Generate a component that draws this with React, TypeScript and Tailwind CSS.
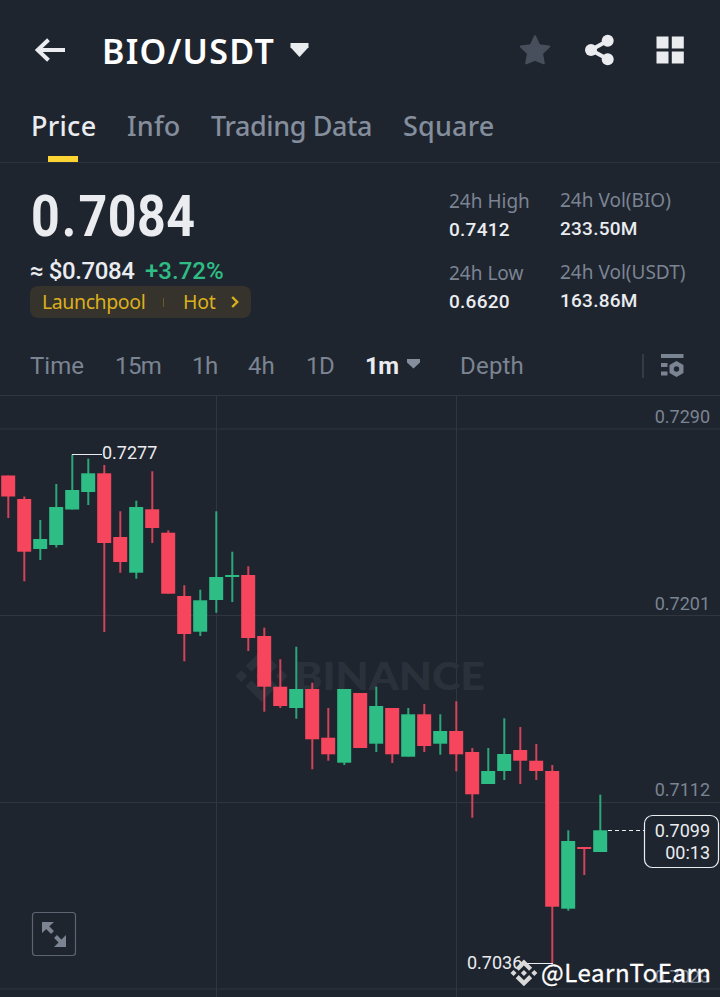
import React from 'react';

interface Candle {
    top: number;
    bottom: number;
    high: number;
    low: number;
    up?: boolean;
}

const UP = '#2ebd85';
const DOWN = '#f6465d';

const c = (top: number, bottom: number, high: number, low: number, up = false): Candle => ({ top, bottom, high, low, up });

// y values are page based, the chart svg starts at CHART_TOP
const CHART_TOP = 395;

const candles: Candle[] = [
    c(475.5, 496.5, 475.5, 518),
    c(499, 551.7, 496.5, 581.3),
    c(539, 549, 520, 560, true),
    c(507, 545, 484, 547.5, true),
    c(490, 509.5, 454.5, 509.5, true),
    c(473.3, 492, 458.7, 505, true),
    c(473.3, 543, 465, 632),
    c(537, 562, 511.3, 572.7),
    c(507, 572.7, 500.7, 578.7, true),
    c(509.3, 528, 471.3, 543),
    c(532.7, 593.7, 530.3, 593.7),
    c(596, 634, 585.3, 661.3),
    c(600.3, 631.7, 589.7, 636, true),
    c(577, 600, 511.3, 612.7, true),
    c(575, 577, 551.7, 602, true),
    c(575, 638, 566.3, 651),
    c(636, 686.7, 627.7, 711.7),
    c(686.7, 706, 659.3, 708),
    c(689, 708, 646.7, 718.7, true),
    c(689, 739.3, 682.7, 769.3),
    c(737.7, 754.3, 708, 760.7),
    c(689, 762.7, 689, 765, true),
    c(693, 748, 693, 748),
    c(706, 743.7, 686.7, 752, true),
    c(708, 754.3, 708, 763),
    c(714.3, 756.7, 708, 756.7, true),
    c(714.3, 746, 704, 752),
    c(731, 743.7, 714.3, 754.7, true),
    c(731, 754.3, 701.3, 771.3),
    c(752, 794.3, 748, 817.7),
    c(771, 784, 748, 784, true),
    c(754, 771, 718.3, 780, true),
    c(750, 760.7, 727, 784),
    c(760.7, 771, 744, 780),
    c(771, 906.7, 765, 963.3),
    c(841, 908.7, 830.3, 910.7, true),
    c(847, 849, 848, 875),
    c(830.3, 852, 794.7, 852, true),
];

const gridRows = [395.5, 429, 615.5, 802.5, 989];
const gridCols = [216.5, 456.5];

const axisLabels = [
    { text: '0.7290', y: 423 },
    { text: '0.7201', y: 610 },
    { text: '0.7112', y: 796 },
    { text: '0.7023', y: 983 },
];

const tabs = [
    { label: 'Price', cls: 'w-[96px] text-[#eaecef] tracking-[0.3px]', active: true },
    { label: 'Info', cls: 'w-[84px] text-[#848e9c] tracking-[0.2px]' },
    { label: 'Trading Data', cls: 'w-[192px] text-[#848e9c] tracking-[-0.4px]' },
    { label: 'Square', cls: 'w-[100px] text-[#848e9c] tracking-[0.2px]' },
];

const intervals = [
    { label: 'Time', cls: 'w-[85px]' },
    { label: '15m', cls: 'w-[77px] tracking-[-0.6px]' },
    { label: '1h', cls: 'w-[56px] tracking-[-0.5px]' },
    { label: '4h', cls: 'w-[58px]' },
    { label: '1D', cls: 'w-[59px] tracking-[-0.5px]' },
];

const BinanceMark = () => (
    <path d="M16.624 13.920l2.717 2.715-7.353 7.353-7.353-7.352 2.717-2.716 4.636 4.659 4.636-4.659zm4.637-4.637L24 12l-2.715 2.716L18.568 12l2.693-2.717zm-9.272.001l2.716 2.692-2.717 2.717L9.272 12l2.717-2.716zm-9.273-.001L5.409 12l-2.692 2.692L0 12l2.716-2.717zM11.988.012l7.353 7.329-2.717 2.715-4.636-4.636-4.636 4.660-2.717-2.716z" />
);

const Header = () => (
    <header className="flex h-[100px] items-center pl-[34px] pr-[36px]">
        <svg className="h-6 w-8" viewBox="0 0 32 24" fill="none" stroke="#eaecef" strokeWidth="4">
            <path d="M31 12H4M14.500 1.700L3.700 12l10.800 10.300" />
        </svg>
        <h1 className="ml-[36px] mt-[2px] w-[188px] whitespace-nowrap font-['Noto_Sans',sans-serif] text-[34px] font-semibold leading-none tracking-[1.3px] text-white">
            BIO/USDT
        </h1>
        <svg className="h-[15px] w-[19px]" viewBox="0 0 19 15" fill="#eaecef">
            <path d="M0.500 0h18v4.200L9.500 14 0.500 4.200z" />
        </svg>
        <div className="ml-auto flex items-center">
            <svg className="h-[32px] w-[32px]" viewBox="0 0 32 32" fill="#474f5c" stroke="#474f5c" strokeWidth="2" strokeLinejoin="round">
                <path d="M16 2.200l4.200 9 10 1.300-7.200 7 1.800 9.800L16 25.800l-8.800 3.500L9 19.500l-7.200-7 10-1.300z" />
            </svg>
            <svg className="ml-[33px] h-8 w-[31px]" viewBox="0 0 31 32" fill="#eaecef">
                <path d="M24 6.500L7 16l17 9.300" fill="none" stroke="#eaecef" strokeWidth="4" />
                <circle cx="7" cy="16" r="6" />
                <circle cx="23.700" cy="6.800" r="6" />
                <circle cx="23.700" cy="25.200" r="6" />
            </svg>
            <svg className="ml-[41px] h-[28px] w-[28px]" viewBox="0 0 28 28" fill="#eaecef">
                <path d="M0.500 0.500h12v12h-12zM15.800 0.500h12v12h-12zM0.500 15.500h12v12h-12zM15.800 15.500h12v12h-12z" />
            </svg>
        </div>
    </header>
);

const Tabs = () => (
    <nav className="flex h-[63px] border-b border-[#2b323c] pl-[31px] pt-[7px] font-['Noto_Sans',sans-serif] text-[27px] font-medium">
        {tabs.map(tab => (
            <div key={tab.label} className={`${tab.cls} flex flex-col justify-between whitespace-nowrap`}>
                <span className="leading-[38px]">{tab.label}</span>
                {tab.active && <div className="ml-[17px] h-[6px] w-[30px] bg-[#fcd535]" />}
            </div>
        ))}
    </nav>
);

const Stat = ({ label, value }: { label: string; value: string }) => (
    <div className="h-[72px] whitespace-nowrap">
        <div className="font-['Noto_Sans',sans-serif] text-[19px] leading-7 text-[#7b8492]">{label}</div>
        <div className="font-[Roboto,sans-serif] text-[19px] font-medium leading-[30px] tracking-[0.25px] text-[#eaecef]">{value}</div>
    </div>
);

const Summary = () => (
    <section className="flex h-[179px] pl-[30px] font-[Roboto,sans-serif]">
        <div className="w-[419px]">
            <div className="mt-[22px] h-[64px] origin-left scale-x-[0.88] whitespace-nowrap pl-px text-[57px] font-bold leading-[64px] tracking-[0.5px] text-[#eaecef]">
                0<span className="mx-[2px]">.</span>7084
            </div>
            <div className="mt-[7px] flex h-[30px] items-center pb-px text-[24px] leading-none">
                <span className="w-[115px] whitespace-nowrap font-medium tracking-[-0.4px] text-[#eaecef]">≈ $0.7084</span>
                <span className="font-medium text-[#2ebd85]">+3.72%</span>
            </div>
            <div className="flex h-[32px] w-[221px] items-center whitespace-nowrap rounded-lg bg-[#35332c] pl-[12px] font-['Noto_Sans',sans-serif] text-[19.5px] text-[#dcaf1d]">
                <span className="w-[121px] tracking-[-0.4px]">Launchpool</span>
                <span className="h-[9px] w-px bg-[#6b5a24]" />
                <span className="ml-[19px] w-[48px] tracking-[-0.3px]">Hot</span>
                <svg className="h-3 w-2" viewBox="0 0 8 12" fill="none" stroke="#dcaf1d" strokeWidth="2.400">
                    <path d="M1.200 1l5 5-5 5" />
                </svg>
            </div>
        </div>
        <div className="w-[111px] pt-[24px]">
            <Stat label="24h High" value="0.7412" />
            <Stat label="24h Low" value="0.6620" />
        </div>
        <div className="pt-[23px]">
            <Stat label="24h Vol(BIO)" value="233.50M" />
            <Stat label="24h Vol(USDT)" value="163.86M" />
        </div>
    </section>
);

const IntervalBar = () => (
    <section className="flex h-[53px] items-center pb-[6px] pl-[30px] font-[Roboto,sans-serif] text-[24px] text-[#7b8492]">
        {intervals.map(item => (
            <span key={item.label} className={`${item.cls} whitespace-nowrap`}>{item.label}</span>
        ))}
        <span className="w-[42px] font-bold tracking-[-0.5px] text-[#eaecef]">1m</span>
        <svg className="mb-[3px] h-[10px] w-[13px]" viewBox="0 0 13 10" fill="#848e9c">
            <path d="M0 0h13v3.500L6.500 9.500 0 3.500z" />
        </svg>
        <span className="ml-[40px] w-[182px] tracking-[0.2px]">Depth</span>
        <span className="h-6 w-[2px] bg-[#333b46]" />
        <svg className="mb-[2px] ml-[16px] h-6 w-6" viewBox="0 0 24 24" fill="#7b8492">
            <path d="M1 1h22.500v4H1zM1 10h6.500v4H1zM1 18.500h6.500v4H1z" />
            <path fillRule="evenodd" d="M16.500 8l7 4v8l-7 4-7-4v-8zM16.500 13.300a2.700 2.700 0 1 0 0 5.400 2.700 2.700 0 0 0 0-5.400z" />
        </svg>
    </section>
);

const Chart = () => (
    <svg className="block h-[602px] w-[720px] font-[Roboto,sans-serif]" viewBox={`0 ${CHART_TOP} 720 602`} fontSize="18">
        <g stroke="#2f3640" strokeWidth="1">
            {gridRows.map(y => <line key={y} x1="0" x2="720" y1={y} y2={y} />)}
            {gridCols.map(x => <line key={x} x1={x} x2={x} y1={CHART_TOP} y2="997" />)}
        </g>

        <g fill="#2b313b">
            <g transform="translate(235.500 650) scale(2.170)"><BinanceMark /></g>
            <text x="294" y="690" className="font-[Lato,sans-serif]" fontSize="38.500" fontWeight="900" textLength="191" lengthAdjust="spacingAndGlyphs">BINANCE</text>
        </g>

        {candles.map((candle, i) => (
            <g key={i} fill={candle.up ? UP : DOWN}>
                <rect x={i * 16 + 7.3} y={candle.high} width="2" height={candle.low - candle.high} opacity="0.85" />
                <rect x={i * 16 + 1.2} y={candle.top} width="14" height={candle.bottom - candle.top} />
            </g>
        ))}

        <g fill="#7b8492">
            {axisLabels.map(label => (
                <text key={label.text} x="710" y={label.y} textAnchor="end">{label.text}</text>
            ))}
        </g>

        <g stroke="#eaecef" strokeWidth="1.200">
            <path d="M72 454.500h30M522 963.500h31" />
            <path d="M608 830.500h37" strokeDasharray="4 3" />
        </g>
        <rect x="644.500" y="815.500" width="74" height="52" rx="8" fill="#1f252f" stroke="#eaecef" strokeWidth="1.200" />
        <g fill="#eaecef">
            <text x="102" y="459">0.7277</text>
            <text x="467" y="969">0.7036</text>
            <text x="710" y="837" textAnchor="end">0.7099</text>
            <text x="710" y="859" textAnchor="end">00:13</text>
        </g>

        {/* fullscreen button */}
        <rect x="32.500" y="912.500" width="43" height="43" rx="3" fill="none" stroke="#5b6472" strokeWidth="1.200" />
        <path fill="#7b8492" d="M42 922h12l-12 11zM66 947h-12l12-12z" />
        <path stroke="#7b8492" strokeWidth="4" d="M45 925l7.500 7.500M63 944l-7.500-7.500" />

        <g fill="#d9d9d9" transform="translate(510.500 959.500) scale(1.120)"><BinanceMark /></g>
        <text x="541" y="982" className="font-['Noto_Sans_CJK_SC',sans-serif]" fontSize="24" fontWeight="400" fill="#ffffff" stroke="#ffffff" strokeWidth="0.300" textLength="170">@LearnToEarn</text>
    </svg>
);

export default function App() {
    return (
        <div className="h-[997px] w-[720px] overflow-hidden bg-[#1f252f]">
            <Header />
            <Tabs />
            <Summary />
            <IntervalBar />
            <Chart />
        </div>
    );
}
